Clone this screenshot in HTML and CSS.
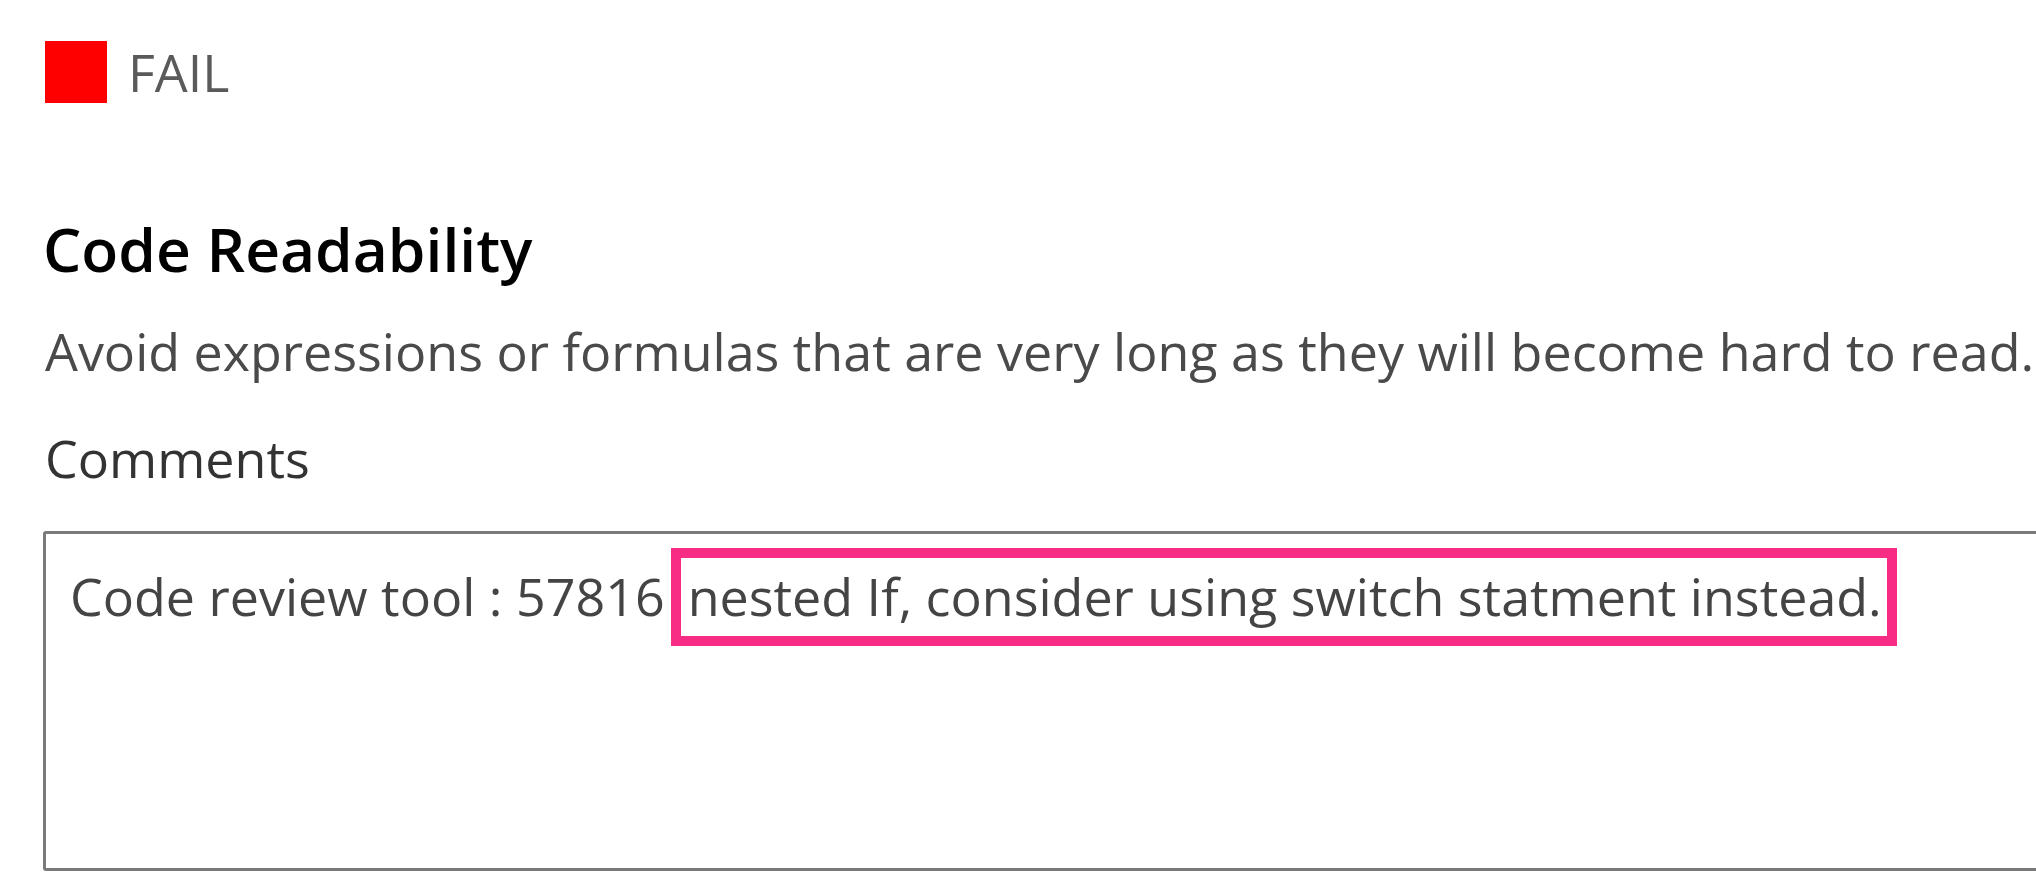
FILE: index.html
```html
<!DOCTYPE html>
<html lang="en">
<head>
<meta charset="utf-8">
<title>Code Readability</title>
<link rel="stylesheet" href="styles.css">
</head>
<body>
<main class="page">
  <div class="status">
    <span class="status-swatch"></span>
    <span class="status-label">FAIL</span>
  </div>
  <section class="criterion">
    <h2 class="criterion-title">Code Readability</h2>
    <p class="criterion-desc">Avoid expressions or formulas that are very long as they will become hard to read.</p>
    <label class="field-label">Comments</label>
    <div class="comment-box">Code review tool : 57816<span class="highlight">nested If, consider using switch statment instead.</span></div>
  </section>
</main>
</body>
</html>
```
FILE: styles.css
```css
html, body {
  margin: 0;
  padding: 0;
  background: #fff;
}
body {
  font-family: "Open Sans", "Noto Sans", sans-serif;
  overflow: hidden;
}
.page {
  padding: 41px 0 0 45px;
  width: 2036px;
  height: 887px;
  box-sizing: border-box;
  overflow: hidden;
}
.status {
  display: flex;
  align-items: center;
  gap: 21px;
  height: 62px;
}
.status-swatch {
  width: 62px;
  height: 62px;
  background: #ff0000;
  flex: none;
}
.status-label {
  font-size: 52px;
  color: #5a5a5a;
  line-height: 62px;
}
.criterion {
  margin-left: -2px;
}
.criterion-title {
  margin: 106px 0 0 0;
  font-size: 60.5px;
  font-weight: 600;
  color: #000;
  line-height: 80px;
}
.criterion-desc {
  margin: 27px 0 0 2px;
  font-size: 52px;
  color: #4a4a4a;
  line-height: 70px;
}
.field-label {
  display: block;
  margin: 37px 0 0 2px;
  font-size: 52px;
  color: #333;
  line-height: 70px;
}
.comment-box {
  margin-top: 38px;
  width: 2100px;
  height: 340px;
  border: 3px solid #7a7a7a;
  border-radius: 3px;
  box-sizing: border-box;
  padding: 27px 0 0 24px;
  font-size: 52px;
  line-height: 70px;
  color: #444;
}
.highlight {
  margin-left: 6px;
  padding: 2px 5px 5px 7px;
  border: 10px solid #f92c85;
}
```
